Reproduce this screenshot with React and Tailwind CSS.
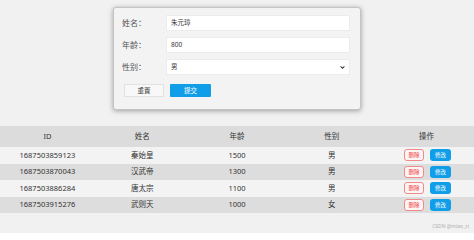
import React from "react";

const rows = [
  { id: "1687503859123", name: "秦始皇", age: 1500, sex: "男" },
  { id: "1687503870043", name: "汉武帝", age: 1300, sex: "男" },
  { id: "1687503886284", name: "唐太宗", age: 1100, sex: "男" },
  { id: "1687503915276", name: "武则天", age: 1000, sex: "女" },
];

const font = { fontFamily: '"Noto Sans", "Noto Sans CJK SC", sans-serif' };

function Field({ label, children }) {
  return (
    <div className="flex items-center h-[16px]">
      <div className="w-[44px] text-[8px] text-[#555]">{label}</div>
      {children}
    </div>
  );
}

export default function App() {
  return (
    <div className="w-[474px] h-[233px] bg-[#f1f1f1] relative overflow-hidden" style={font}>
      <div className="pt-[7px] flex justify-center">
        <div className="w-[248px] h-[103px] bg-[#f3f3f3] border border-[#c4c4c4] rounded-[3px] shadow-[0_1px_5px_rgba(0,0,0,0.35)] pl-[8px] pr-[10px] pt-[7px] flex flex-col gap-[6px]">
          <Field label="姓名：">
            <div className="flex-1 h-[16px] bg-white border border-[#ececec] flex items-center px-[4px] text-[6.5px] text-[#333]">
              朱元璋
            </div>
          </Field>
          <Field label="年龄：">
            <div className="flex-1 h-[16px] bg-white border border-[#ececec] flex items-center px-[4px] text-[6.5px] text-[#333]">
              800
            </div>
          </Field>
          <Field label="性别：">
            <div className="flex-1 h-[16px] bg-white border border-[#ececec] flex items-center justify-between px-[4px] text-[6.5px] text-[#333]">
              <span>男</span>
              <svg width="5" height="3" viewBox="0 0 6 4">
                <path d="M0.5 0.5 L3 3 L5.5 0.5" stroke="#333" strokeWidth="1.4" fill="none" />
              </svg>
            </div>
          </Field>
          <div className="flex gap-[6px] pl-[2px] mt-[3px]">
            <div className="w-[40px] h-[13px] bg-[#f8f8f8] border border-[#e2e2e2] flex items-center justify-center text-[6.5px] text-[#333]">
              重置
            </div>
            <div className="w-[41px] h-[13px] bg-[#109ee8] rounded-[1px] flex items-center justify-center text-[6.5px] text-white">
              提交
            </div>
          </div>
        </div>
      </div>

      <div className="mt-[16px] text-[7.5px] text-[#333]">
        <div className="grid grid-cols-5 h-[21px] items-center bg-[#dcdcdc] text-center">
          <div>ID</div>
          <div>姓名</div>
          <div>年龄</div>
          <div>性别</div>
          <div>操作</div>
        </div>
        {rows.map((r, i) => (
          <div
            key={r.id}
            className={
              "grid grid-cols-5 h-[16.5px] items-center text-center " +
              (i % 2 === 0 ? "bg-[#f3f3f3]" : "bg-[#dddddd]")
            }
          >
            <div>{r.id}</div>
            <div>{r.name}</div>
            <div>{r.age}</div>
            <div>{r.sex}</div>
            <div className="flex justify-center gap-[6px] pl-[2px]">
              <div className="w-[20px] h-[12px] border border-[#f08a8a] rounded-[3px] bg-[#fdf4f4] flex items-center justify-center text-[5.5px] text-[#f04040]">
                删除
              </div>
              <div className="w-[21px] h-[12px] rounded-[3px] bg-[#109ee8] flex items-center justify-center text-[5.5px] text-white">
                修改
              </div>
            </div>
          </div>
        ))}
      </div>

      <div className="absolute right-[5px] bottom-[3px] text-[5px] text-[#b0b0b0]">CSDN @miao_zi</div>
    </div>
  );
}
